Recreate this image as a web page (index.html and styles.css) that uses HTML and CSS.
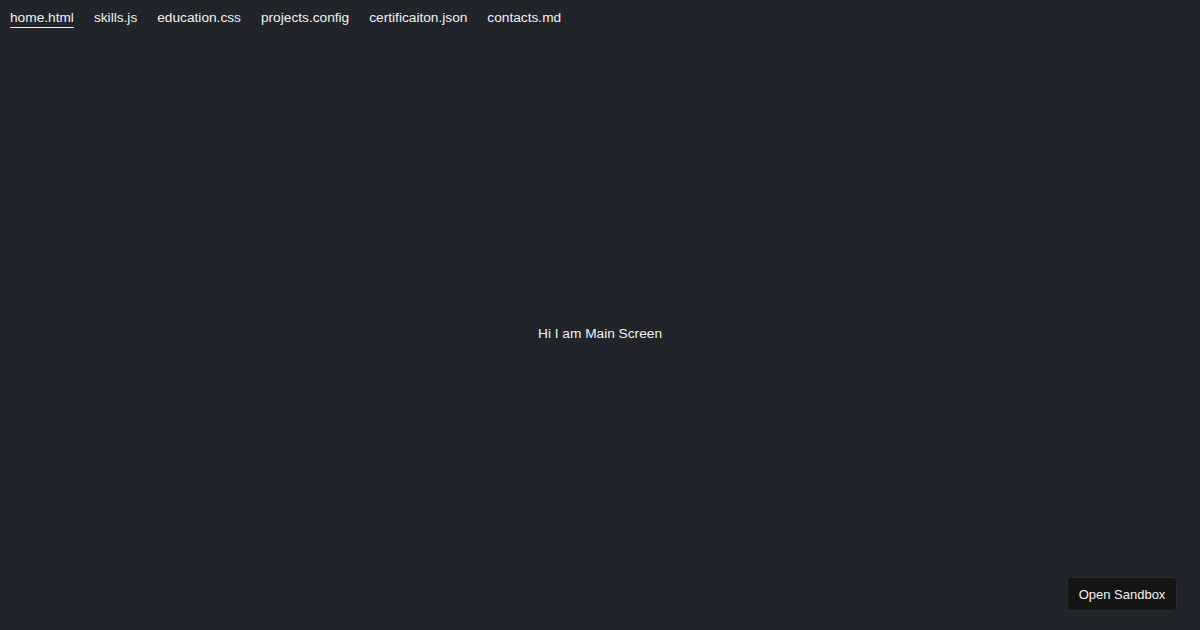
FILE: index.html
```html
<!DOCTYPE html>
<html>
<head>
<meta charset="utf-8">
<link rel="stylesheet" href="styles.css">
</head>
<body>
<div class="app">
  <nav class="tabs">
    <a class="tab active">home.html</a>
    <a class="tab">skills.js</a>
    <a class="tab">education.css</a>
    <a class="tab">projects.config</a>
    <a class="tab">certificaiton.json</a>
    <a class="tab">contacts.md</a>
  </nav>
  <main class="screen">Hi I am Main Screen</main>
</div>
<button class="sandbox">Open Sandbox</button>
</body>
</html>
```
FILE: styles.css
```css
html, body {
  margin: 0;
  padding: 0;
  height: 100%;
  background: #21242b;
  color: #f2f2f2;
  font-family: "Liberation Sans", Arial, sans-serif;
  font-size: 13.7px;
}
.app {
  display: flex;
  flex-direction: column;
  height: 100%;
}
.tabs {
  display: flex;
  gap: 20px;
  padding: 9px 10px 0 10px;
}
.tab {
  line-height: 18px;
  border-bottom: 1px solid transparent;
  color: #f2f2f2;
}
.tab.active {
  border-bottom-color: #f2f2f2;
}
.screen {
  flex: 1;
  display: flex;
  align-items: center;
  justify-content: center;
  padding-top: 8px;
}
.sandbox {
  position: fixed;
  right: 23px;
  bottom: 19px;
  width: 110px;
  height: 34px;
  background: #151515;
  color: #f2f2f2;
  border: 1px solid #2b2b2b;
  border-radius: 4px;
  font-family: "Liberation Sans", Arial, sans-serif;
  font-size: 13px;
  padding: 0;
}
```
